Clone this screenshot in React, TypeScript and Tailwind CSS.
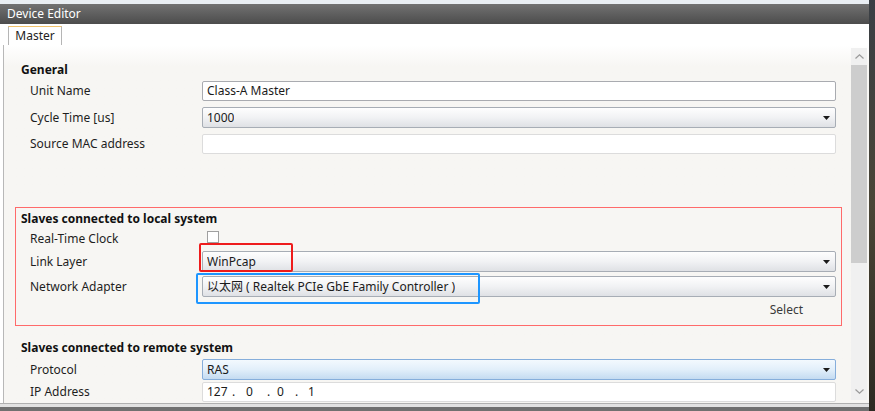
import React from 'react'

const FONT = "'Noto Sans', 'Noto Sans CJK SC', sans-serif"

// ── Small building blocks ───────────────────────────────────────────────────

const Arrow: React.FC = () => (
  <svg width="7" height="4" viewBox="0 0 7 4" className="shrink-0">
    <path d="M0 0h7L3.5 4z" fill="#1a1a1a" />
  </svg>
)

const Combo: React.FC<{ value: React.ReactNode; focused?: boolean }> = ({ value, focused }) => (
  <div
    className={`flex h-[21px] w-full items-center justify-between rounded-[2px] border pl-[4px] pr-[5px] ${
      focused
        ? 'border-[#86aedb] bg-gradient-to-b from-[#f3f9fe] via-[#e2effa] to-[#c4dbf1]'
        : 'border-[#a7adb5] bg-gradient-to-b from-[#fefefe] via-[#f1f2f4] to-[#dfe1e5]'
    }`}
  >
    <span className="truncate text-[12px] text-[#1b1b1b]">{value}</span>
    <Arrow />
  </div>
)

const TextBox: React.FC<{ value?: React.ReactNode; faint?: boolean }> = ({ value, faint }) => (
  <div
    className={`flex h-[20px] w-full items-center rounded-[2px] border bg-white pl-[4px] text-[12px] text-[#1b1b1b] ${
      faint ? 'border-[#dcdcdc]' : 'border-[#a9abb0]'
    }`}
  >
    {value}
  </div>
)

const Label: React.FC<{ children: React.ReactNode }> = ({ children }) => (
  <span className="w-[181px] shrink-0 pl-[9px] text-[12px] leading-[16px] text-[#1e1e1e]">{children}</span>
)

const Row: React.FC<{ label: string; className?: string; children: React.ReactNode }> = ({ label, className, children }) => (
  <div className={`flex items-center ${className ?? ''}`}>
    <Label>{label}</Label>
    <div className="flex-1">{children}</div>
  </div>
)

const Heading: React.FC<{ children: React.ReactNode }> = ({ children }) => (
  <div className="h-[16px] text-[12px] font-bold leading-[16px] text-[#111]">{children}</div>
)

// ── Page ────────────────────────────────────────────────────────────────────

export default function App() {
  return (
    <div className="flex h-[411px] w-[875px] overflow-hidden bg-[#f7f6f3]" style={{ fontFamily: FONT }}>
      <div className="flex w-[869px] flex-col">
        <div className="h-[4px] bg-[#e9eef3]" />
        {/* title bar */}
        <div className="flex h-[20px] items-center bg-gradient-to-b from-[#727272] to-[#4c4c4c] pl-[7px] text-[12px] text-white">
          Device Editor
        </div>
        {/* tab strip */}
        <div className="flex h-[21px] items-end bg-white pl-[8px]">
          <div className="flex h-[19px] w-[54px] items-center justify-center border-x border-t border-x-[#b5b5b5] border-t-[#f2c36b] bg-white text-[12px] text-[#1e1e1e]">
            Master
          </div>
        </div>

        {/* content */}
        <div className="flex h-[358px] bg-white">
          <div className="ml-[3px] flex flex-1 border-l border-[#b8b8b8] bg-gradient-to-b from-white to-[#f7f6f3] to-[6%]">
            <div className="flex-1 overflow-hidden pl-[11px] pr-[9px]">
              {/* General */}
              <div className="mt-[17px] px-[6px]">
                <Heading>General</Heading>
                <Row label="Unit Name" className="mt-[3px]">
                  <TextBox value="Class-A Master" />
                </Row>
                <Row label="Cycle Time [us]" className="mt-[6px]">
                  <Combo value="1000" />
                </Row>
                <Row label="Source MAC address" className="mt-[6px]">
                  <TextBox faint />
                </Row>
              </div>

              {/* Slaves connected to local system (annotated with a red frame) */}
              <div className="mt-[53px] bg-[#ff6a6a] p-px">
                <div className="bg-[#f7f6f3] px-[5px] pb-[7px] pt-[3px]">
                  <Heading>Slaves connected to local system</Heading>
                  <div className="mt-[4px] flex h-[16px] items-start">
                    <Label>Real-Time Clock</Label>
                    <div className="ml-[5px] h-[12px] w-[12px] border border-[#a0a0a0] bg-white" />
                  </div>
                  <Row label="Link Layer" className="mt-[4px]">
                    <div className="relative">
                      <Combo value="WinPcap" />
                      <div className="absolute left-[-3px] top-[-8px] h-[29px] w-[94px] rounded-[2px] border-2 border-[#ee1c1c]" />
                    </div>
                  </Row>
                  <Row label="Network Adapter" className="mt-[4px]">
                    <div className="relative">
                      <Combo value="以太网 ( Realtek PCIe GbE Family Controller )" />
                      <div className="absolute left-[-6px] top-[-3px] h-[31px] w-[284px] rounded-[2px] border-2 border-[#1e96ff]" />
                    </div>
                  </Row>
                  <div className="mt-[5px] flex h-[16px] justify-end pr-[33px] text-[12px] leading-[16px] text-[#3a3a3a]">Select</div>
                </div>
              </div>

              {/* Slaves connected to remote system */}
              <div className="mt-[14px] px-[6px]">
                <Heading>Slaves connected to remote system</Heading>
                <Row label="Protocol" className="mt-[3px]">
                  <Combo value="RAS" focused />
                </Row>
                <Row label="IP Address" className="mt-[2px]">
                  <TextBox
                    faint
                    value={
                      <span className="flex">
                        <span className="w-[25px]">127</span>
                        <span className="w-[14px]">.</span>
                        <span className="w-[21px]">0</span>
                        <span className="w-[10px]">.</span>
                        <span className="w-[18px]">0</span>
                        <span className="w-[13px]">.</span>
                        <span>1</span>
                      </span>
                    }
                  />
                </Row>
              </div>
            </div>

            {/* scrollbar */}
            <div className="mr-[2px] mt-[3px] flex h-[352px] w-[16px] flex-col bg-[#f0f0f0]">
              <div className="flex h-[17px] items-center justify-center">
                <svg width="9" height="5" viewBox="0 0 9 5">
                  <path d="M0.5 4.5L4.5 0.8L8.5 4.5" fill="none" stroke="#9a9a9a" strokeWidth="1.2" />
                </svg>
              </div>
              <div className="h-[198px] bg-[#cdcdcd]" />
              <div className="flex-1" />
              <div className="flex h-[17px] items-center justify-center">
                <svg width="9" height="5" viewBox="0 0 9 5">
                  <path d="M0.5 0.5L4.5 4.2L8.5 0.5" fill="none" stroke="#9a9a9a" strokeWidth="1.2" />
                </svg>
              </div>
            </div>
          </div>
        </div>

        {/* bottom edge */}
        <div className="h-[1px] bg-[#b0b0b0]" />
        <div className="h-[3px] bg-[#e2e2e2]" />
        <div className="flex-1 bg-[#707070]" />
      </div>
      <div className="flex-1 bg-gradient-to-b from-[#3a3f45] via-[#4a4536] to-[#2d2a22]" />
    </div>
  )
}
